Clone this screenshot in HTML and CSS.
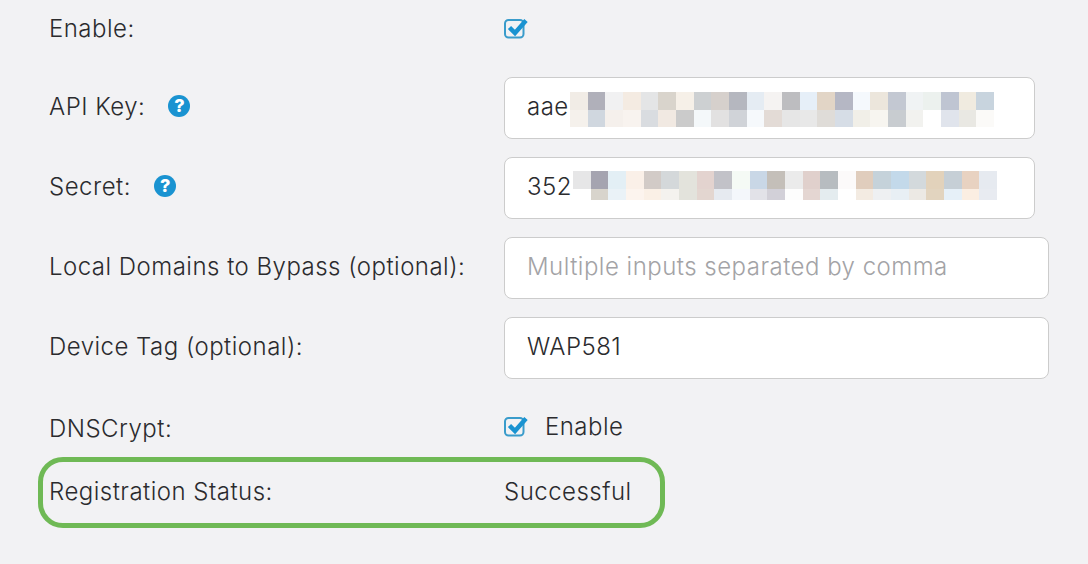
FILE: index.html
```html
<!DOCTYPE html>
<html lang="en">
<head>
  <meta charset="UTF-8">
  <title>Umbrella Settings</title>
  <link rel="stylesheet" href="styles.css">
</head>
<body>

  <div class="form">
    <div class="row row-enable">
      <div class="label">Enable:</div>
      <svg class="check" viewBox="0 0 24 22"><rect x="1" y="3" width="18.5" height="17.5" rx="3.5"/><path d="M5.5 10.5l5.5 5.5L22 3.5"/></svg>
    </div>

    <div class="row row-input">
      <div class="label">API Key: <span class="help">?</span></div>
      <div class="field short">
        <input type="text" value="aae">
        <svg class="mosaic mosaic-api" width="424" height="35" shape-rendering="crispEdges">
          <g id="apiTop"></g><g id="apiBottom"></g>
        </svg>
      </div>
    </div>

    <div class="row row-input">
      <div class="label">Secret: <span class="help">?</span></div>
      <div class="field short">
        <input type="text" value="352">
        <svg class="mosaic mosaic-secret" width="424" height="29" shape-rendering="crispEdges">
          <g id="secretTop"></g><g id="secretBottom"></g>
        </svg>
      </div>
    </div>

    <div class="row row-input">
      <div class="label">Local Domains to Bypass (optional):</div>
      <div class="field">
        <input type="text" placeholder="Multiple inputs separated by comma">
      </div>
    </div>

    <div class="row row-input">
      <div class="label">Device Tag (optional):</div>
      <div class="field">
        <input type="text" value="WAP581">
      </div>
    </div>

    <div class="row row-dns">
      <div class="label">DNSCrypt:</div>
      <svg class="check" viewBox="0 0 24 22"><rect x="1" y="3" width="18.5" height="17.5" rx="3.5"/><path d="M5.5 10.5l5.5 5.5L22 3.5"/></svg>
      <span class="check-text">Enable</span>
    </div>

    <div class="row row-status">
      <div class="label">Registration Status:</div>
      <div>Successful</div>
    </div>
  </div>

  <script src="mosaic.js"></script>
</body>
</html>
```

FILE: mosaic.js
```js
// pixelated blocks that hide the key and the secret
const cells = {
  apiTop: [0, 18, ['#f1ece6','#b0b0ba','#f1f1f2','#f4ebe2','#e4e5e6','#d9d4cc','#f6f0e8','#cdd0d2','#d6d0cc','#b5b7bf','#e5ecf3','#f5f3f2','#bdbdc0','#e6eff8','#e2d5c6','#b5b7c4','#f5f9fd','#ece6dc','#c3c8d2','#f0f3f4','#ecf1ee','#bfc5d2','#f0ebe0','#c8d4de']],
  apiBottom: [18, 17, ['#f5f1ec','#d0d7df','#f5f0ec','#f8f3ef','#d9dce0','#f1e9e2','#cbcbcb','#f4f8fa','#e2e1e1','#d0d3d8','#f6f9fc','#e3dbd6','#e6e6e6','#e8e8e8','#dfdcd8','#d6dde6','#f1efe8','#f7f5f0','#c8ccd0','#f2f2ef','#ffffff','#e0e4ec','#e9e8e3','#fbfaf8']],
  secretTop: [0, 18, ['#e6e6e7','#a5a4b0','#e3eff5','#faf0e8','#d2cbc7','#d4d8da','#e3e3dc','#e3d3cf','#c2c2c8','#f5faf5','#c9d7e6','#c4bfb9','#ebebeb','#e0d0cc','#b7bcc0','#fcfafa','#e0cdbd','#c5d2da','#c3d9ea','#d3d9dc','#e2d2bb','#c6cfd6','#e8d2c1','#e6eaf0']],
  secretBottom: [18, 11, ['#ffffff','#d8d4cc','#eaf2f7','#fcf4ee','#faf0e6','#f4f2ee','#e3e3dc','#e3d6d0','#e6eaf0','#f4f7fb','#e2e2e8','#d2d0d8','#fdfdfd','#e4d6d2','#e4ecef','#ffffff','#f3ebe2','#eef0f2','#e8eff4','#ece9e4','#e2d4bf','#e6f0f8','#fbeee2','#e8ebf1']]
};

for (const id in cells) {
  const [y, h, colors] = cells[id];
  const group = document.getElementById(id);
  colors.forEach(function(color, i) {
    const rect = document.createElementNS('http://www.w3.org/2000/svg', 'rect');
    rect.setAttribute('x', (i * 17.67).toFixed(2));
    rect.setAttribute('y', y);
    rect.setAttribute('width', 17.67);
    rect.setAttribute('height', h);
    rect.setAttribute('fill', color);
    group.appendChild(rect);
  });
}
```

FILE: styles.css
```css
html, body {
  height: 100%;
}
body {
  margin: 0;
  background-color: #f2f2f4;
  color: #2b2b2e;
  font-family: Inter, "Liberation Sans", sans-serif;
  font-size: 24px;
  font-weight: 350;
  letter-spacing: 0.48px;
  overflow: hidden;
}
.form {
  padding-left: 49px;
}
.row {
  display: flex;
  align-items: center;
}
.label {
  width: 455px;
  flex-shrink: 0;
}
.row-enable {
  height: 56px;
  margin-bottom: 21px;
}
.row-input {
  height: 62px;
  margin-bottom: 18px;
}
.row-input .label {
  margin-bottom: 4px;
}
.row-dns {
  height: 58px;
  margin-top: 21px;
}
.row-dns .label {
  margin-bottom: 2px;
}
.row-dns .check, .row-dns .check-text {
  margin-bottom: 6px;
}
.row-status {
  position: relative;
  height: 60px;
  margin-top: 4px;
  padding-bottom: 2px;
  box-sizing: border-box;
}
.row-status::after {
  content: "";
  position: absolute;
  left: -11px;
  top: -5px;
  width: 627px;
  height: 71px;
  box-sizing: border-box;
  border: 5px solid #6fb955;
  border-radius: 25px;
}
.help {
  display: inline-block;
  width: 22px;
  height: 22px;
  margin-left: 16px;
  border-radius: 50%;
  background-color: #1a93d1;
  color: #fff;
  font-size: 18px;
  font-weight: 800;
  letter-spacing: 0;
  line-height: 22px;
  text-align: center;
  vertical-align: 3px;
}
.check {
  width: 24px;
  height: 22px;
  fill: none;
  stroke: #1a93d1;
}
.check rect {
  stroke-width: 2;
  stroke: #3a9ccb;
}
.check path {
  stroke-width: 4.5;
}
.check-text {
  margin-left: 17px;
}
.field {
  position: relative;
  width: 545px;
}
.field.short {
  width: 531px;
}
.field input {
  display: block;
  width: 100%;
  height: 62px;
  box-sizing: border-box;
  padding: 0 22px 4px;
  background-color: #fff;
  border: 1px solid #ccc;
  border-radius: 8px;
  color: #2b2b2e;
  font-family: inherit;
  font-size: 24px;
  font-weight: inherit;
  letter-spacing: inherit;
}
.field input::placeholder {
  color: #a3a3a6;
}
.mosaic {
  position: absolute;
}
.mosaic-api {
  left: 66px;
  top: 15px;
}
.mosaic-secret {
  left: 69px;
  top: 14px;
}
```
